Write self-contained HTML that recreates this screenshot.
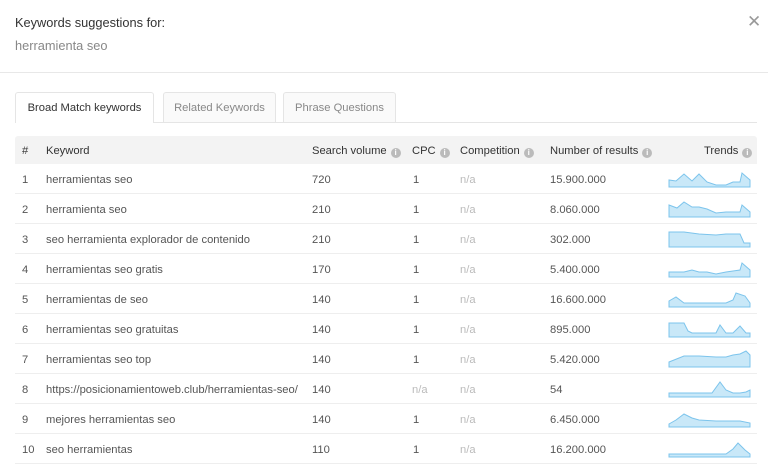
<!DOCTYPE html>
<html><head><meta charset="utf-8"><style>
body{margin:0;width:768px;height:476px;background:#fff;font-family:"Liberation Sans",sans-serif;overflow:hidden;position:relative;color:#555}
.t1{position:absolute;left:15px;top:15px;font-size:12.8px;color:#333}
.t2{position:absolute;left:15px;top:38px;font-size:12.8px;color:#888}
.x{position:absolute;left:747px;top:12px;font-size:17px;color:#999;font-weight:300}
.sep{position:absolute;left:0;right:0;top:72px;border-top:1px solid #e8e8e8}
.tab{position:absolute;top:92px;height:30px;line-height:30px;font-size:11.2px;border:1px solid #e5e5e5;border-bottom:none;background:#fafafa;color:#888;text-align:center;box-sizing:border-box;border-radius:3px 3px 0 0}
.tabline{position:absolute;left:15px;right:11px;top:122px;border-top:1px solid #e5e5e5}
.hdr{position:absolute;left:15px;width:742px;top:136px;height:28px;background:#f3f3f3;border-radius:3px 3px 0 0}
.c{position:absolute;font-size:11.2px;white-space:nowrap}
.h{color:#333}
.i{display:inline-block;width:10px;height:10px;border-radius:50%;background:#bbb;color:#fff;font-size:8px;line-height:10px;text-align:center;vertical-align:-1px;margin-left:4px;font-weight:bold}
.row{position:absolute;left:15px;width:742px;border-bottom:1px solid #eee}
.na{color:#bbb}
</style></head><body>
<div class="t1">Keywords suggestions for:</div>
<div class="t2">herramienta seo</div>
<div class="x">✕</div>
<div class="sep"></div>
<div class="tab" style="left:15px;width:139px;background:#fff;color:#333;height:31px">Broad Match keywords</div>
<div class="tab" style="left:163px;width:113px">Related Keywords</div>
<div class="tab" style="left:283px;width:113px">Phrase Questions</div>
<div class="tabline" style="left:154px"></div>
<div class="hdr"></div>
<div class="c h" style="left:22px;top:145px">#</div>
<div class="c h" style="left:46px;top:145px">Keyword</div>
<div class="c h" style="left:312px;top:145px">Search volume<span class="i">i</span></div>
<div class="c h" style="left:412px;top:145px">CPC<span class="i">i</span></div>
<div class="c h" style="left:460px;top:145px">Competition<span class="i">i</span></div>
<div class="c h" style="left:550px;top:145px">Number of results<span class="i">i</span></div>
<div class="c h" style="left:704px;top:145px">Trends<span class="i">i</span></div>
<div id="rows"></div>
<svg width="768" height="476" style="position:absolute;left:0;top:0">
<g fill="#c9e8f8" stroke="#7cc4ec" stroke-width="1">
<polygon points="669,187 669,180 676,181 684,174 692,181 699,174 707,182 716,185 726,185 733,182 740,182 742,173 750,180 750,187"/>
<polygon points="669,217 669,205 677,208 684,202 692,207 699,207 707,209 716,213 726,212 733,212 740,212 742,205 750,212 750,217"/>
<polygon points="669,247 669,232 684,232 699,234 716,235 726,234 740,234 744,243 750,243 750,247"/>
<polygon points="669,277 669,272 684,272 692,270 699,272 707,272 716,274 726,272 733,271 740,270 742,263 750,270 750,277"/>
<polygon points="669,307 669,301 676,297 684,303 699,303 716,303 726,303 733,300 736,293 745,296 750,303 750,307"/>
<polygon points="669,337 669,323 684,323 688,331 692,333 699,333 707,333 716,333 720,325 726,333 733,333 740,326 746,333 750,333 750,337"/>
<polygon points="669,367 669,362 684,356 699,356 716,357 726,357 733,355 740,354 746,351 750,355 750,367"/>
<polygon points="669,397 669,393 699,393 712,393 720,382 726,390 733,393 740,393 746,392 750,390 750,397"/>
<polygon points="669,427 669,424 676,420 684,414 692,418 699,420 716,421 726,421 733,421 740,421 750,423 750,427"/>
<polygon points="669,457 669,454 699,454 716,454 726,454 733,449 738,443 745,450 750,454 750,457"/>
</g></svg>
<script>
var d=[["herramientas seo","720","1","15.900.000"],["herramienta seo","210","1","8.060.000"],["seo herramienta explorador de contenido","210","1","302.000"],["herramientas seo gratis","170","1","5.400.000"],["herramientas de seo","140","1","16.600.000"],["herramientas seo gratuitas","140","1","895.000"],["herramientas seo top","140","1","5.420.000"],["https://posicionamientoweb.club/herramientas-seo/","140","n/a","54"],["mejores herramientas seo","140","1","6.450.000"],["seo herramientas","110","1","16.200.000"]];
var h="";d.forEach(function(r,i){var y=164+i*30;
h+='<div class="row" style="top:'+y+'px;height:29px"></div>';
var t=y+10;
h+='<div class="c" style="left:22px;top:'+t+'px">'+(i+1)+'</div><div class="c" style="left:46px;top:'+t+'px">'+r[0]+'</div><div class="c" style="left:312px;top:'+t+'px">'+r[1]+'</div><div class="c'+(r[2]=="n/a"?" na":"")+'" style="left:'+(r[2]=="n/a"?412:413)+'px;top:'+t+'px">'+r[2]+'</div><div class="c na" style="left:460px;top:'+t+'px">n/a</div><div class="c" style="left:550px;top:'+t+'px">'+r[3]+'</div>';});
document.getElementById("rows").innerHTML=h;
</script>
</body></html>
